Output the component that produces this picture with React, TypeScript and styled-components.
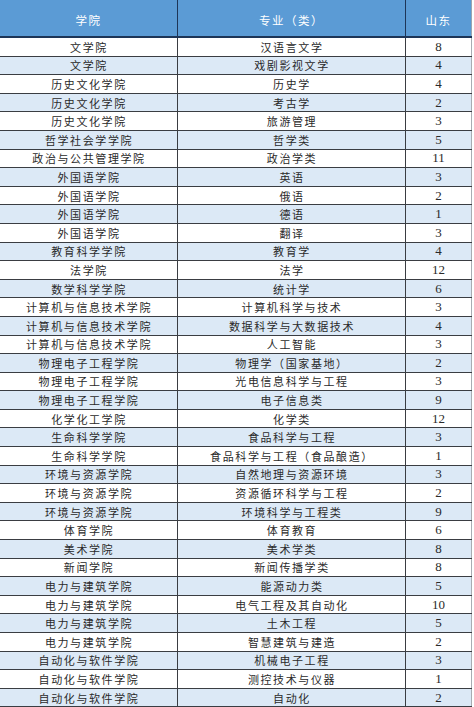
import styled, { createGlobalStyle } from "styled-components";

const GlobalStyle = createGlobalStyle`
  html, body {
    margin: 0;
    padding: 0;
    background: #ffffff;
  }
  * {
    box-sizing: border-box;
  }
`;

interface iRow {
  college: string;
  major: string;
  count: number;
}

const rows: iRow[] = [
  { college: "文学院", major: "汉语言文学", count: 8 },
  { college: "文学院", major: "戏剧影视文学", count: 4 },
  { college: "历史文化学院", major: "历史学", count: 4 },
  { college: "历史文化学院", major: "考古学", count: 2 },
  { college: "历史文化学院", major: "旅游管理", count: 3 },
  { college: "哲学社会学学院", major: "哲学类", count: 5 },
  { college: "政治与公共管理学院", major: "政治学类", count: 11 },
  { college: "外国语学院", major: "英语", count: 3 },
  { college: "外国语学院", major: "俄语", count: 2 },
  { college: "外国语学院", major: "德语", count: 1 },
  { college: "外国语学院", major: "翻译", count: 3 },
  { college: "教育科学学院", major: "教育学", count: 4 },
  { college: "法学院", major: "法学", count: 12 },
  { college: "数学科学学院", major: "统计学", count: 6 },
  { college: "计算机与信息技术学院", major: "计算机科学与技术", count: 3 },
  { college: "计算机与信息技术学院", major: "数据科学与大数据技术", count: 4 },
  { college: "计算机与信息技术学院", major: "人工智能", count: 3 },
  { college: "物理电子工程学院", major: "物理学（国家基地）", count: 2 },
  { college: "物理电子工程学院", major: "光电信息科学与工程", count: 3 },
  { college: "物理电子工程学院", major: "电子信息类", count: 9 },
  { college: "化学化工学院", major: "化学类", count: 12 },
  { college: "生命科学学院", major: "食品科学与工程", count: 3 },
  { college: "生命科学学院", major: "食品科学与工程（食品酿造）", count: 1 },
  { college: "环境与资源学院", major: "自然地理与资源环境", count: 3 },
  { college: "环境与资源学院", major: "资源循环科学与工程", count: 2 },
  { college: "环境与资源学院", major: "环境科学与工程类", count: 9 },
  { college: "体育学院", major: "体育教育", count: 6 },
  { college: "美术学院", major: "美术学类", count: 8 },
  { college: "新闻学院", major: "新闻传播学类", count: 8 },
  { college: "电力与建筑学院", major: "能源动力类", count: 5 },
  { college: "电力与建筑学院", major: "电气工程及其自动化", count: 10 },
  { college: "电力与建筑学院", major: "土木工程", count: 5 },
  { college: "电力与建筑学院", major: "智慧建筑与建造", count: 2 },
  { college: "自动化与软件学院", major: "机械电子工程", count: 3 },
  { college: "自动化与软件学院", major: "测控技术与仪器", count: 1 },
  { college: "自动化与软件学院", major: "自动化", count: 2 },
];

const App = () => {
  return (
    <>
      <GlobalStyle />
      <Table>
        <HeaderRow>
          <HeadCell>学院</HeadCell>
          <HeadCell>专业（类）</HeadCell>
          <HeadCell $last>山东</HeadCell>
        </HeaderRow>
        {rows.map((r, i) => (
          <Row key={i} $shaded={i % 2 === 1}>
            <TextCell>{r.college}</TextCell>
            <TextCell>{r.major}</TextCell>
            <NumCell>{r.count}</NumCell>
          </Row>
        ))}
      </Table>
    </>
  );
};

export default App;

const Table = styled.div`
  width: 472px;
  display: flex;
  flex-direction: column;
`;

const HeaderRow = styled.div`
  display: grid;
  grid-template-columns: 178px 228px 66px;
  height: 38px;
  background-color: #5b9bd5;
  border-bottom: 2px solid #1d3557;
`;

const HeadCell = styled.div<{ $last?: boolean }>`
  display: flex;
  align-items: center;
  justify-content: center;
  padding-top: 3px;
  color: #ffffff;
  font-family: "Noto Sans CJK SC", sans-serif;
  font-size: 11.5px;
  letter-spacing: 1.5px;
  border-right: 1px solid ${(p) => (p.$last ? "#9aa6b2" : "#1d3557")};
`;

const Row = styled.div<{ $shaded: boolean }>`
  display: grid;
  grid-template-columns: 178px 228px 66px;
  height: 18.6px;
  background-color: ${(p) => (p.$shaded ? "#dce9f6" : "#ffffff")};
  border-bottom: 1px solid #3a3d42;
`;

const TextCell = styled.div`
  display: flex;
  align-items: center;
  justify-content: center;
  padding-left: 1px;
  color: #2a2a2a;
  font-family: "Noto Sans CJK SC", sans-serif;
  font-size: 11px;
  letter-spacing: 1.6px;
  white-space: nowrap;
  border-right: 1px solid #3a3d42;
`;

const NumCell = styled.div`
  display: flex;
  align-items: center;
  justify-content: center;
  color: #2a2a2a;
  font-family: "Liberation Serif", serif;
  font-size: 13px;
  border-right: 1px solid #a8adb3;
`;
